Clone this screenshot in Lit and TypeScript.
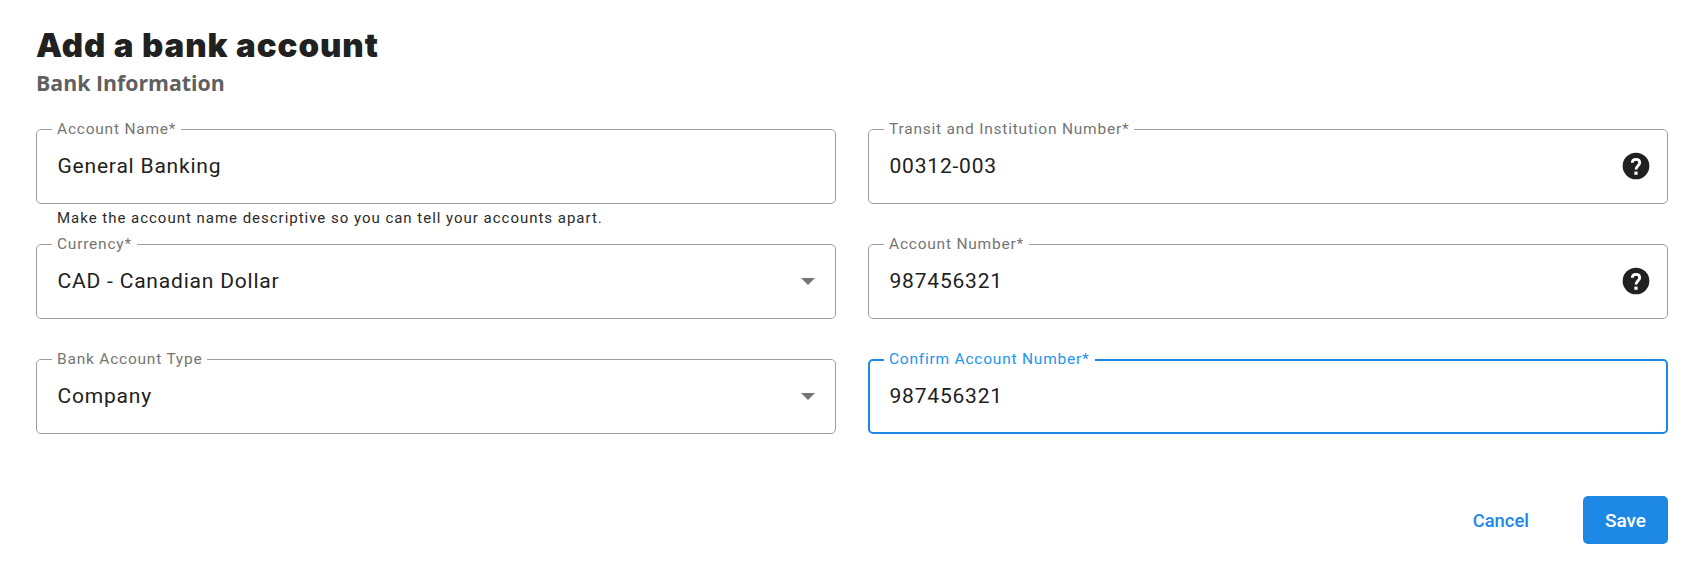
import { LitElement, html, css, svg } from "lit";
import { customElement } from "lit/decorators.js";
import { classMap } from "lit/directives/class-map.js";

const helpIcon = html`<svg class="help" viewBox="0 0 24 24" width="32" height="32">${svg`<circle cx="12" cy="12" r="10" fill="#212121"/><path fill="none" stroke="#fff" stroke-width="2.1" d="M9.2 9.6C9.2 8 10.4 7 12 7s2.8 1 2.8 2.6c0 2.2-2.8 2.3-2.8 5.1"/><rect x="10.8" y="16.2" width="2.4" height="2.4" fill="#fff"/>`}</svg>`;
const caret = html`<svg class="caret" viewBox="0 0 14 7" width="14" height="7">${svg`<path fill="#757575" d="M0 0h14L7 7z"/>`}</svg>`;

interface F { label: string; value: string; helper?: string; end?: "help" | "caret"; focused?: boolean; }
const fields: F[] = [
  { label: "Account Name*", value: "General Banking", helper: "Make the account name descriptive so you can tell your accounts apart." },
  { label: "Transit and Institution Number*", value: "00312-003", end: "help" },
  { label: "Currency*", value: "CAD - Canadian Dollar", end: "caret" },
  { label: "Account Number*", value: "987456321", end: "help" },
  { label: "Bank Account Type", value: "Company", end: "caret" },
  { label: "Confirm Account Number*", value: "987456321", focused: true },
];

@customElement("app-root")
export class AppRoot extends LitElement {
  static styles = css`
    :host { display: block; width: 1702px; height: 566px; box-sizing: border-box; padding: 26px 34px 0 36px; background: #fff; font-family: Roboto, sans-serif; color: #212121; overflow: hidden; }
    h1 { margin: 0; font: 900 33px/38px Inter, "Liberation Sans", sans-serif; letter-spacing: 0.95px; color: #212121; }
    h2 { margin: 5px 0 0; font: 700 21.3px/27px "Open Sans", sans-serif; color: #5f5f5f; }
    .grid { display: grid; grid-template-columns: 800px 800px; column-gap: 32px; grid-auto-rows: 115px; margin-top: 25px; }
    fieldset { box-sizing: border-box; margin: 0; height: 83px; padding: 0 16px 9px 21px; border: 1px solid #9e9e9e; border-radius: 5px; display: flex; align-items: center; justify-content: space-between; }
    legend { margin-left: -6px; padding: 0 5px; font-size: 15.5px; line-height: 17px; letter-spacing: 0.78px; color: #757575; }
    .value { margin-left: -0.5px; font-size: 21px; line-height: 24px; letter-spacing: 0.8px; color: #212121; }
    .focused { border: 2px solid #1e88e5; padding: 0 15px 9px 20px; }
    .focused legend { color: #2196f3; }
    .help { margin-right: -1px; }
    .caret { margin-right: 4px; }
    .helper { margin: 6px 0 0 21px; font-size: 15px; line-height: 16px; letter-spacing: 0.98px; color: #2b2b2b; }
    .actions { display: flex; justify-content: flex-end; align-items: center; gap: 54px; margin-top: 30px; }
    .cancel { font-size: 18.4px; font-weight: 500; color: #1e88e5; background: none; border: 0; padding: 0; font-family: inherit; }
    .save { width: 85px; height: 48px; border: 0; border-radius: 5px; background: #1e88e5; color: #fff; font: 500 19px Roboto, sans-serif; padding: 0; }
  `;

  render() {
    return html`
      <h1>Add a bank account</h1>
      <h2>Bank Information</h2>
      <div class="grid">
        ${fields.map((f) => html`
          <div>
            <fieldset class=${classMap({ focused: !!f.focused })}>
              <legend>${f.label}</legend>
              <span class="value">${f.value}</span>
              ${f.end === "help" ? helpIcon : f.end === "caret" ? caret : ""}
            </fieldset>
            ${f.helper ? html`<div class="helper">${f.helper}</div>` : ""}
          </div>`)}
      </div>
      <div class="actions">
        <button class="cancel">Cancel</button>
        <button class="save">Save</button>
      </div>`;
  }
}
